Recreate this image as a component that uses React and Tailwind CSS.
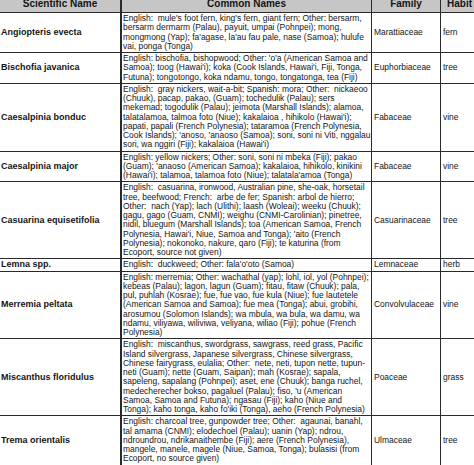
import React from "react";

const rows = [
  {
    name: "Angiopteris evecta",
    lines: [
      "English:  mule's foot fern, king's fern, giant fern; Other: bersarm,",
      "bersarm dermarm (Palau), payuit, umpai (Pohnpei); mong,",
      "mongmong (Yap); fa'agase, la'au fau pale, nase (Samoa); hulufe",
      "vai, ponga (Tonga)",
    ],
    family: "Marattiaceae",
    habit: "fern",
  },
  {
    name: "Bischofia javanica",
    lines: [
      "English: bischofia, bishopwood; Other: 'o'a (American Samoa and",
      "Samoa); toog (Hawai'i); koka (Cook Islands, Hawai'i, Fiji, Tonga,",
      "Futuna); tongotongo, koka ndamu, tongo, tongatonga, tea (Fiji)",
    ],
    family: "Euphorbiaceae",
    habit: "tree",
  },
  {
    name: "Caesalpinia bonduc",
    lines: [
      "English:  gray nickers, wait-a-bit; Spanish: mora; Other:  nickaeoo",
      "(Chuuk), pacap, pakao, (Guam); tochedulik (Palau); sers",
      "mekemad; togodulik (Palau); jeimota (Marshall Islands); alamoa,",
      "talatalamoa, talmoa foto (Niue); kakalaioa , hihikolo (Hawai'i);",
      "papati, papali (French Polynesia); tataramoa (French Polynesia,",
      "Cook Islands); 'anoso, 'anaoso (Samoa); soni, soni ni Viti, nggalau",
      "sori, wa nggiri (Fiji); kakalaioa (Hawai'i)",
    ],
    family: "Fabaceae",
    habit: "vine",
  },
  {
    name: "Caesalpinia major",
    lines: [
      "English: yellow nickers; Other: soni, soni ni mbeka (Fiji); pakao",
      "(Guam); 'anaoso (American Samoa); kakalaioa, hihikolo, kinikini",
      "(Hawai'i); talamoa, talamoa foto (Niue); talatala'amoa (Tonga)",
    ],
    family: "Fabaceae",
    habit: "vine",
  },
  {
    name: "Casuarina equisetifolia",
    lines: [
      "English:  casuarina, ironwood, Australian pine, she-oak, horsetail",
      "tree, beefwood; French:  arbe de fer; Spanish: arbol de hierro;",
      "Other:  nach (Yap); lach (Ulithi); laash (Woleai); weeku (Chuuk);",
      "gagu, gago (Guam, CNMI); weighu (CNMI-Carolinian); pinetree,",
      "nidil, bluegum (Marshall Islands); toa (American Samoa, French",
      "Polynesia, Hawai'i, Niue, Samoa and Tonga); 'aito (French",
      "Polynesia); nokonoko, nakure, qaro (Fiji); te katurina (from",
      "Ecoport, source not given)",
    ],
    family: "Casuarinaceae",
    habit: "tree",
  },
  {
    name: "Lemna spp.",
    lines: ["English:  duckweed; Other: fala'o'oto (Samoa)"],
    family: "Lemnaceae",
    habit: "herb",
  },
  {
    name: "Merremia peltata",
    lines: [
      "English: merremia; Other: wachathal (yap); lohl, iol, yol (Pohnpei);",
      "kebeas (Palau); lagon, lagun (Guam); fitau, fitaw (Chuuk); pala,",
      "pul, puhlah (Kosrae); fue, fue vao, fue kula (Niue); fue lautetele",
      "(American Samoa and Samoa); fue mea (Tonga); abui, grobihi,",
      "arosumou (Solomon Islands); wa mbula, wa bula, wa damu, wa",
      "ndamu, viliyawa, wiliviwa, veliyana, wiliao (Fiji); pohue (French",
      "Polynesia)",
    ],
    family: "Convolvulaceae",
    habit: "vine",
  },
  {
    name: "Miscanthus floridulus",
    lines: [
      "English:  miscanthus, swordgrass, sawgrass, reed grass, Pacific",
      "Island silvergrass, Japanese silvergrass, Chinese silvergrass,",
      "Chinese fairygrass, eulalia; Other:  nete, neti, tupon nette, tupun-",
      "neti (Guam); nette (Guam, Saipan); mah (Kosrae); sapala,",
      "sapeleng, sapalang (Pohnpei); aset, ene (Chuuk); banga ruchel,",
      "medecherecher bokso, pagaluel (Palau); fiso, 'u (American",
      "Samoa, Samoa and Futuna); ngasau (Fiji); kaho (Niue and",
      "Tonga); kaho tonga, kaho fo'iki (Tonga), aeho (French Polynesia)",
    ],
    family: "Poaceae",
    habit: "grass",
  },
  {
    name: "Trema orientalis",
    lines: [
      "English: charcoal tree, gunpowder tree; Other:  agaunai, banahl,",
      "tal amama (CNMI); elodechoel (Palau); uanin (Yap); ndrou,",
      "ndroundrou, ndrikanaithembe (Fiji); aere (French Polynesia),",
      "mangele, manele, magele (Niue, Samoa, Tonga); bulasisi (from",
      "Ecoport, no source given)",
    ],
    family: "Ulmaceae",
    habit: "tree",
  },
];

const SpeciesRow = ({ row }) => (
  <div className="flex border-b border-[#2a2a2a]">
    <div className="flex w-[122px] shrink-0 items-center border-r-2 border-[#2a2a2a] pl-[1px] text-[9px] font-bold">
      {row.name}
    </div>
    <div className="w-[250px] shrink-0 border-r border-[#2a2a2a] px-[1px] py-[1px]">
      {row.lines.map((line, i) => (
        <div key={i} className="whitespace-pre">{line}</div>
      ))}
    </div>
    <div className="flex w-[69px] shrink-0 items-center border-r border-[#2a2a2a] pl-[2px]">
      {row.family}
    </div>
    <div className="flex w-[60px] shrink-0 items-center pl-[2px]">
      {row.habit}
    </div>
  </div>
);

export default function App() {
  return (
    <div className="h-[465px] w-[474px] overflow-hidden bg-white font-['Liberation_Sans',Arial,sans-serif] text-[8.45px] leading-[9.25px] text-[#151515]">
      <div className="w-[520px]">
        {/* header row, top edge cropped in the source */}
        <div className="flex h-[13px] overflow-hidden border-b border-[#2a2a2a] bg-[#c6c6c6] text-[10px] font-bold leading-[11px]">
          <div className="flex w-[122px] shrink-0 justify-center border-r-2 border-[#2a2a2a]">
            <span className="-mt-[2px]">Scientific Name</span>
          </div>
          <div className="flex w-[250px] shrink-0 justify-center border-r border-[#2a2a2a]">
            <span className="-mt-[2px]">Common Names</span>
          </div>
          <div className="flex w-[69px] shrink-0 justify-center border-r border-[#2a2a2a]">
            <span className="-mt-[2px]">Family</span>
          </div>
          <div className="w-[60px] shrink-0 pl-[6px]">
            <span className="-mt-[2px] block">Habit</span>
          </div>
        </div>
        {rows.map((row) => (
          <SpeciesRow key={row.name} row={row} />
        ))}
      </div>
    </div>
  );
}
